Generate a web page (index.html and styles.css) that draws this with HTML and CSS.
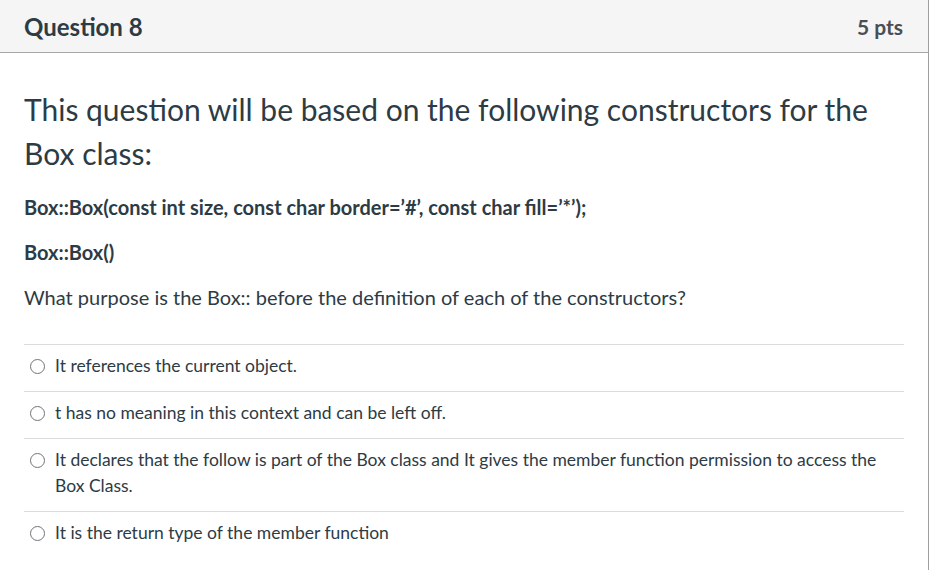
FILE: index.html
```html
<!DOCTYPE html>
<html>
<head>
<meta charset="utf-8">
<link rel="stylesheet" href="styles.css">
</head>
<body>
<div class="card">
  <div class="header">
    <span class="qname">Question 8</span>
    <span class="pts">5 pts</span>
  </div>
  <div class="content">
    <p class="lead">This question will be based on the following constructors for the Box class:</p>
    <p class="code">Box::Box(const int size, const char border=’#’, const char fill=’*’);</p>
    <p class="code">Box::Box()</p>
    <p class="ask">What purpose is the Box:: before the definition of each of the constructors?</p>
    <div class="answers">
      <label class="answer"><span class="radio"></span><span class="atext">It references the current object.</span></label>
      <label class="answer"><span class="radio"></span><span class="atext">t has no meaning in this context and can be left off.</span></label>
      <label class="answer"><span class="radio"></span><span class="atext">It declares that the follow is part of the Box class and It gives the member function permission to access the Box Class.</span></label>
      <label class="answer"><span class="radio"></span><span class="atext">It is the return type of the member function</span></label>
    </div>
  </div>
</div>
</body>
</html>
```

FILE: styles.css
```css
html, body {
  margin: 0;
  padding: 0;
  background: #ffffff;
  overflow: hidden;
}
body {
  font-family: Lato, "Noto Sans", sans-serif;
  color: #2d3b45;
}
.card {
  width: 928px;
  min-height: 570px;
  border-right: 1px solid #9e9e9e;
}
.header {
  height: 53px;
  box-sizing: border-box;
  background: #f5f5f5;
  border-bottom: 1px solid #a6a6a6;
  display: flex;
  align-items: center;
  justify-content: space-between;
  padding: 0 25px 0 24px;
}
.qname {
  font-size: 24px;
  font-weight: 700;
}
.pts {
  font-size: 21px;
  font-weight: 700;
  color: #4a4f54;
}
.content {
  padding: 34px 24px 0 24px;
}
.lead {
  margin: 0;
  font-size: 30px;
  line-height: 44px;
}
.code {
  margin: 20px 0 0;
  font-size: 20px;
  font-weight: 700;
  line-height: 25px;
}
.ask {
  margin: 20px 0 0;
  font-size: 20px;
  line-height: 25px;
}
.answers {
  margin-top: 34px;
}
.answer {
  display: flex;
  align-items: flex-start;
  gap: 10px;
  border-top: 1px solid #dcdcdc;
  padding: 8px 0 12px 0;
  font-size: 17.5px;
  line-height: 26px;
}
.radio {
  flex: none;
  box-sizing: border-box;
  width: 15px;
  height: 15px;
  margin: 6px 0 0 6px;
  border: 1.5px solid #707478;
  border-radius: 50%;
}
.atext {
  flex: 1;
  padding-right: 20px;
}
```
